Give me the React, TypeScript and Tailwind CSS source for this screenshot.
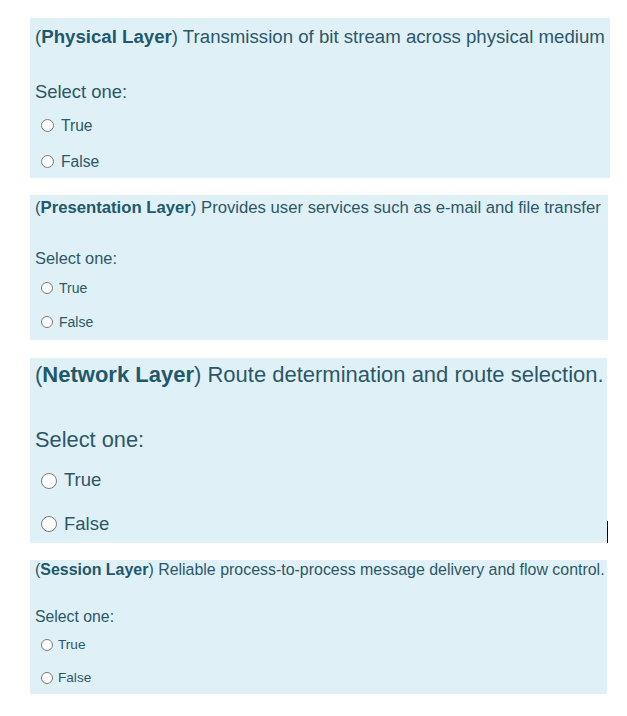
import React from 'react';

interface Sizes {
    block: string;
    title: string;
    select: string;
    trueRow: string;
    falseRow: string;
    option: string;
    radio: string;
}

interface QuestionProps {
    layer: string;
    text: string;
    s: Sizes;
    caret?: boolean;
}

const Radio: React.FC<{ cls: string }> = ({ cls }) => (
    <span className={`inline-block shrink-0 rounded-full border border-[#7a7a7a] bg-white ${cls}`} />
);

const Question: React.FC<QuestionProps> = ({ layer, text, s, caret }) => (
    <div className={`relative flex flex-col bg-[#dff1f7] pl-[5px] text-[#2d5767] ${s.block}`}>
        <div className={`flex items-center whitespace-nowrap ${s.title}`}>
            <span>
                (<b className="font-bold text-[#22586b]">{layer}</b>) {text}
            </span>
        </div>
        <div className={`flex items-center ${s.select}`}>Select one:</div>
        {['True', 'False'].map((label, i) => (
            <div key={label} className={`flex items-center pl-[6px] ${i === 0 ? s.trueRow : s.falseRow} ${s.option}`}>
                <Radio cls={s.radio} />
                <span>{label}</span>
            </div>
        ))}
        {caret && <span className="absolute right-[-1px] bottom-0 h-[22px] w-px bg-black" />}
    </div>
);

const blocks: { layer: string; text: string; s: Sizes; caret?: boolean }[] = [
    {
        layer: 'Physical Layer',
        text: 'Transmission of bit stream across physical medium',
        s: {
            block: 'mt-[18px] w-[580px]',
            title: 'h-[38px] text-[18.65px]',
            select: 'mt-[22px] h-[28px] text-[18.4px]',
            trueRow: 'h-[39px]',
            falseRow: 'h-[33px]',
            option: 'gap-[7px] text-[15.6px]',
            radio: 'h-[13px] w-[13px]',
        },
    },
    {
        layer: 'Presentation Layer',
        text: 'Provides user services such as e-mail and file transfer',
        s: {
            block: 'mt-[17px] w-[578px]',
            title: 'h-[26px] text-[16.7px]',
            select: 'mt-[23px] h-[28px] text-[16.4px]',
            trueRow: 'h-[32px]',
            falseRow: 'h-[36px]',
            option: 'gap-[6px] text-[14px]',
            radio: 'h-[12px] w-[12px]',
        },
    },
    {
        layer: 'Network Layer',
        text: 'Route determination and route selection.',
        s: {
            block: 'mt-[18px] w-[577px]',
            title: 'h-[34px] text-[22px]',
            select: 'mt-[32px] h-[32px] text-[21.8px]',
            trueRow: 'h-[49px]',
            falseRow: 'h-[38px]',
            option: 'gap-[7px] text-[18.5px]',
            radio: 'h-[16px] w-[16px]',
        },
        caret: true,
    },
    {
        layer: 'Session Layer',
        text: 'Reliable process-to-process message delivery and flow control.',
        s: {
            block: 'mt-[17px] w-[577px]',
            title: 'h-[20px] text-[15.95px]',
            select: 'mt-[25px] h-[24px] text-[15.8px]',
            trueRow: 'h-[32px]',
            falseRow: 'h-[33px]',
            option: 'gap-[5px] text-[13.6px]',
            radio: 'h-[12px] w-[12px]',
        },
    },
];

export default function App() {
    return (
        <div className="min-h-[716px] w-[627px] bg-white pl-[30px] font-['Liberation_Sans',Arial,sans-serif] leading-none">
            {blocks.map(b => (
                <Question key={b.layer} {...b} />
            ))}
        </div>
    );
}
